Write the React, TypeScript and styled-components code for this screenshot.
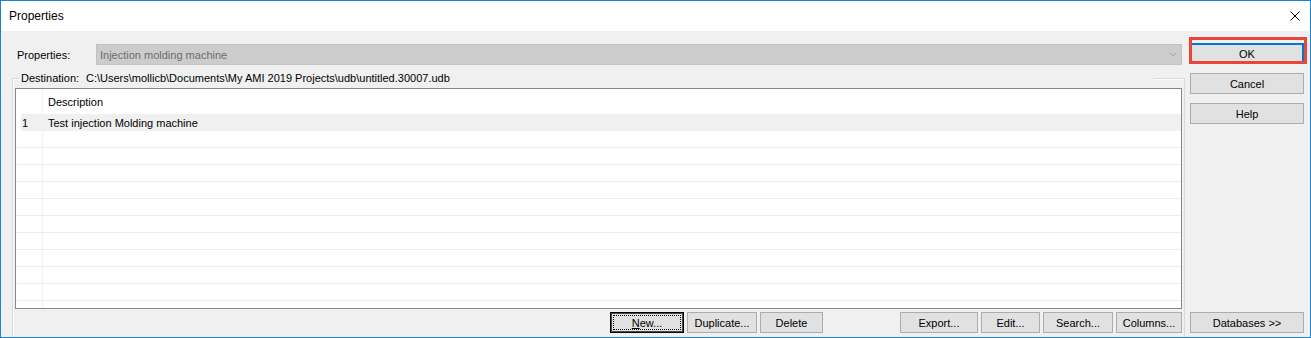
import React from 'react';
import styled, { createGlobalStyle } from 'styled-components';

const GlobalStyle = createGlobalStyle`
  * { box-sizing: border-box; }
  html, body { margin: 0; padding: 0; background: #f0f0f0; }
  body {
    font-family: "Liberation Sans", Arial, sans-serif;
    font-size: 11px;
    color: #000;
  }
`;

const Window = styled.div`
  width: 1311px;
  height: 338px;
  border: 1px solid #1883d7;
  background: #f0f0f0;
  display: flex;
  flex-direction: column;
  overflow: hidden;
`;

const TitleBar = styled.div`
  flex: none;
  height: 30px;
  background: #fff;
  display: flex;
  align-items: center;
  justify-content: space-between;
  padding: 0 10px 0 8px;
  font-size: 12px;
`;

const Body = styled.div`
  flex: 1;
  display: flex;
  min-height: 0;
`;

const Main = styled.div`
  width: 1185px;
  display: flex;
  flex-direction: column;
`;

const PropRow = styled.div`
  display: flex;
  align-items: center;
  padding: 13px 0 0 16px;
`;

const Label = styled.span<{ $w: number }>`
  width: ${({ $w }) => $w}px;
  flex: none;
  white-space: nowrap;
`;

const Combo = styled.div`
  width: 1086px;
  height: 21px;
  background: #cccccc;
  border: 1px solid #c2c2c2;
  color: #6d6d6d;
  display: flex;
  align-items: center;
  justify-content: space-between;
  padding: 0 4px 0 3px;
`;

const GroupBox = styled.div`
  flex: 1;
  min-height: 0;
  margin: 13px 1px 0 11px;
  border: 1px solid #dadada;
  border-bottom: none;
  box-shadow: inset 1px 1px 0 #fbfbfb;
  display: flex;
  flex-direction: column;
  padding: 0 2px 4px 2px;
`;

const Legend = styled.div`
  flex: none;
  margin: -7px 0 0 4px;
  width: 1135px;
  height: 13px;
  line-height: 13px;
  background: #f0f0f0;
  display: flex;
  padding-left: 2px;
  white-space: nowrap;
`;

const Grid = styled.div`
  flex: 1;
  min-height: 0;
  margin-top: 3px;
  border: 1px solid #828790;
  background: #fff;
  overflow: hidden;
`;

const GridRow = styled.div<{ $h: number; $selected?: boolean; $line?: boolean }>`
  display: grid;
  grid-template-columns: 27px 1fr;
  height: ${({ $h }) => $h}px;
  border-bottom: ${({ $line }) => ($line ? '1px solid #ececec' : 'none')};
  background: ${({ $selected }) => ($selected ? 'linear-gradient(to right, #fff 5px, #f0f0f0 5px)' : '#fff')};
`;

const NumCell = styled.div<{ $selected?: boolean }>`
  border-right: 1px solid ${({ $selected }) => ($selected ? 'transparent' : '#f0f0f0')};
  padding-left: 6px;
  display: flex;
  align-items: center;
`;

const TextCell = styled.div`
  padding-left: 5px;
  display: flex;
  align-items: center;
  white-space: nowrap;
`;

const ButtonBar = styled.div`
  flex: none;
  margin-top: 3px;
  display: flex;
  justify-content: flex-end;
  gap: 77px;
`;

const ButtonGroup = styled.div`
  display: flex;
  gap: 3px;
`;

const Button = styled.button<{ $w?: number }>`
  width: ${({ $w }) => ($w ? `${$w}px` : '100%')};
  height: 21px;
  flex: none;
  padding: 0;
  background: #e1e1e1;
  border: 1px solid #adadad;
  font: inherit;
  color: #000;
  display: flex;
  align-items: center;
  justify-content: center;
`;

const DefaultButton = styled(Button)`
  border: 2px solid #0078d7;
`;

const FocusButton = styled(Button)`
  border: 1px solid #000;
  box-shadow: inset 0 0 0 1px #4a4a4a;
  outline: 1px dotted #000;
  outline-offset: -4px;
`;

const Side = styled.div`
  flex: 1;
  display: flex;
  flex-direction: column;
  gap: 9px;
  padding: 12px 6px 4px 4px;
`;

const Highlight = styled.div`
  position: relative;
`;

const RedMark = styled.div`
  position: absolute;
  top: -6px;
  left: -1px;
  right: -3px;
  bottom: 0;
  border: 3px solid #e8453c;
  pointer-events: none;
`;

const BottomSlot = styled.div`
  margin-top: auto;
`;

const PATH = 'C:\\Users\\mollicb\\Documents\\My AMI 2019 Projects\\udb\\untitled.30007.udb';

function App() {
  const emptyRows = Array.from({ length: 11 });

  return (
    <Window>
      <GlobalStyle />
      <TitleBar>
        <span>Properties</span>
        <svg width="10" height="10" viewBox="0 0 10 10">
          <path d="M0.5 0.5 L9.5 9.5 M9.5 0.5 L0.5 9.5" stroke="#000" strokeWidth="1" fill="none" />
        </svg>
      </TitleBar>
      <Body>
        <Main>
          <PropRow>
            <Label $w={79}>Properties:</Label>
            <Combo>
              <span>Injection molding machine</span>
              <svg width="8" height="5" viewBox="0 0 8 5">
                <path d="M0.5 0.5 L4 4 L7.5 0.5" stroke="#a6a6a6" strokeWidth="1" fill="none" />
              </svg>
            </Combo>
          </PropRow>
          <GroupBox>
            <Legend>
              <Label $w={65}>Destination:</Label>
              <span>{PATH}</span>
            </Legend>
            <Grid>
              <GridRow $h={25}>
                <NumCell />
                <TextCell>Description</TextCell>
              </GridRow>
              <GridRow $h={17} $selected>
                <NumCell $selected>1</NumCell>
                <TextCell>Test injection Molding machine</TextCell>
              </GridRow>
              {emptyRows.map((_, i) => (
                <GridRow key={i} $h={17} $line>
                  <NumCell />
                  <TextCell />
                </GridRow>
              ))}
            </Grid>
            <ButtonBar>
              <ButtonGroup>
                <FocusButton $w={74}>
                  <span>
                    <u>N</u>ew...
                  </span>
                </FocusButton>
                <Button $w={70}>Duplicate...</Button>
                <Button $w={63}>Delete</Button>
              </ButtonGroup>
              <ButtonGroup>
                <Button $w={78}>Export...</Button>
                <Button $w={59}>Edit...</Button>
                <Button $w={70}>Search...</Button>
                <Button $w={66}>Columns...</Button>
              </ButtonGroup>
            </ButtonBar>
          </GroupBox>
        </Main>
        <Side>
          <Highlight>
            <DefaultButton>OK</DefaultButton>
            <RedMark />
          </Highlight>
          <Button>Cancel</Button>
          <Button>Help</Button>
          <BottomSlot>
            <Button>Databases &gt;&gt;</Button>
          </BottomSlot>
        </Side>
      </Body>
    </Window>
  );
}

export default App;
